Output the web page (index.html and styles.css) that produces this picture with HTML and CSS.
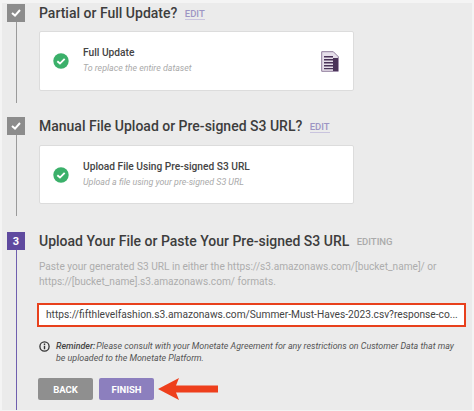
FILE: index.html
```html
<!DOCTYPE html>
<html lang="en">
<head>
<meta charset="utf-8">
<title>Upload</title>
<link rel="stylesheet" href="styles.css">
</head>
<body>
<main class="page">
  <section class="step step-one">
    <div class="rail">
      <div class="badge done"><svg width="10" height="8" viewBox="0 0 10 8"><path d="M1 4l3 2.6L9 1" fill="none" stroke="#fff" stroke-width="2"/></svg></div>
      <div class="line"></div>
    </div>
    <div class="content">
      <h2 class="title">Partial or Full Update? <a class="edit">EDIT</a></h2>
      <div class="card">
        <svg class="check" width="16" height="16" viewBox="0 0 17 17"><circle cx="8.5" cy="8.5" r="8.2" fill="#3bb06a"/><path d="M4.6 8.7l2.8 2.5 5-5" fill="none" stroke="#fff" stroke-width="2"/></svg>
        <div class="card-text">
          <div class="card-name">Full Update</div>
          <div class="card-desc">To replace the entire dataset</div>
        </div>
        <svg class="doc" width="18" height="21" viewBox="0 0 18 21"><path d="M.7.7h11.6l5 5v14.6H.7z" fill="#e6dfea" stroke="#8f7c9c" stroke-width="1"/><path d="M12 2v5h5v13h-5z" fill="#4a3358"/><path d="M3 5h9v1.6H3zM3 8h9v1.6H3zM3 11h9v1.6H3zM3 14h9v1.6H3zM3 17h9v1.2H3z" fill="#4a3358"/></svg>
      </div>
    </div>
  </section>
  <section class="step step-two">
    <div class="rail">
      <div class="badge done"><svg width="10" height="8" viewBox="0 0 10 8"><path d="M1 4l3 2.6L9 1" fill="none" stroke="#fff" stroke-width="2"/></svg></div>
      <div class="line"></div>
    </div>
    <div class="content">
      <h2 class="title">Manual File Upload or Pre-signed S3 URL? <a class="edit">EDIT</a></h2>
      <div class="card">
        <svg class="check" width="16" height="16" viewBox="0 0 17 17"><circle cx="8.5" cy="8.5" r="8.2" fill="#3bb06a"/><path d="M4.6 8.7l2.8 2.5 5-5" fill="none" stroke="#fff" stroke-width="2"/></svg>
        <div class="card-text">
          <div class="card-name">Upload File Using Pre-signed S3 URL</div>
          <div class="card-desc">Upload a file using your pre-signed S3 URL</div>
        </div>
      </div>
    </div>
  </section>
  <section class="step step-three">
    <div class="rail">
      <div class="badge active">3</div>
      <div class="line line-active"></div>
    </div>
    <div class="content">
      <h2 class="title">Upload Your File or Paste Your Pre-signed S3 URL <span class="editing">EDITING</span></h2>
      <p class="hint">Paste your generated S3 URL in either the https://s3.amazonaws.com/[bucket_name]/ or https://[bucket_name].s3.amazonaws.com/ formats.</p>
      <div class="url">https://fifthlevelfashion.s3.amazonaws.com/Summer-Must-Haves-2023.csv?response-co...</div>
      <div class="reminder">
        <svg class="info" width="11" height="11" viewBox="0 0 11 11"><circle cx="5.5" cy="5.5" r="4.6" fill="none" stroke="#333" stroke-width="1.3"/><path d="M4.8 2.6h1.4v1.3H4.8zM4.8 4.8h1.4v3.5H4.8z" fill="#333"/></svg>
        <p class="reminder-text"><b>Reminder:</b>Please consult with your Monetate Agreement for any restrictions on Customer Data that may be uploaded to the Monetate Platform.</p>
      </div>
      <div class="actions">
        <button class="btn back">BACK</button>
        <button class="btn finish">FINISH</button>
        <svg class="arrow" width="60" height="22" viewBox="0 0 60 22"><path d="M0 11L21 0l-3 7.5h42v7H18l3 7.5z" fill="#ee3f1c"/></svg>
      </div>
    </div>
  </section>
</main>
</body>
</html>
```
FILE: styles.css
```css
* { box-sizing: border-box; }
html, body { margin: 0; height: 100%; }
body { background: #f4f4f4; font-family: Roboto, "Liberation Sans", sans-serif; color: #3a3a3a; overflow: hidden; }
.page { background: #ebebeb; margin: 3px 2px 0 2px; height: 407px; padding: 1px 0 0 5px; overflow: hidden; }
.step { display: flex; }
.step-one { height: 113px; }
.step-two { height: 115px; }
.step-three { height: 178px; }
.rail { width: 18px; margin-right: 14px; display: flex; flex-direction: column; align-items: center; flex: none; }
.badge { width: 18px; height: 18px; display: flex; align-items: center; justify-content: center; color: #fff; font-size: 11px; font-weight: 700; flex: none; }
.done { background: #8c8c8c; }
.active { background: #5f4a9f; }
.line { width: 1px; background: #9a9a9a; height: 81px; }
.line-active { background: #6f5fae; height: 170px; }
.content { width: 430px; flex: none; }
.title { margin: 0; font-size: 14px; line-height: 18px; font-weight: 500; color: #3d3d3d; white-space: nowrap; }
.edit { font-size: 9.5px; font-weight: 500; color: #9d95c4; border-bottom: 1px solid #c9c4de; margin-left: 4px; vertical-align: 1px; }
.editing { font-size: 9.5px; font-weight: 500; color: #aaa; margin-left: 4px; vertical-align: 1px; }
.card { margin-top: 8px; width: 315px; height: 60px; background: #fff; border: 1px solid #dcdcdc; border-radius: 2px; display: flex; align-items: center; padding: 0 14px 0 13px; }
.step-two .card { margin-top: 9px; height: 59px; }
.check { flex: none; }
.card-text { margin-left: 14px; flex: 1; }
.step-one .card-text { margin-bottom: 2px; }
.card-name { font-size: 10.2px; line-height: 14px; font-weight: 500; color: #444; }
.card-desc { font-size: 8.85px; line-height: 14px; margin-top: 1px; font-style: italic; color: #aaa; }
.doc { flex: none; }
.hint { margin: 8px 0 0; width: 410px; font-size: 10.15px; line-height: 15px; color: #adadad; }
.url { margin: 14px 0 0 -2px; width: 429px; height: 24px; border: 2px solid #e8401c; background: #fff; font-size: 10.2px; line-height: 19px; padding: 0 7px; color: #444; white-space: nowrap; overflow: hidden; }
.reminder { display: flex; margin-top: 13px; }
.info { flex: none; margin-top: 1px; }
.reminder-text { margin: 0 0 0 6px; width: 404px; font-size: 8.9px; line-height: 12px; font-style: italic; color: #555; }
.reminder-text b { font-weight: 500; color: #444; margin-right: 1px; }
.actions { display: flex; align-items: center; margin: 14px 0 0 -1px; }
.btn { width: 55px; height: 22px; border: 0; border-radius: 2px; color: #fff; font: 700 9.5px Roboto, sans-serif; padding: 0; }
.back { background: #8f8f8f; margin-right: 6px; }
.finish { background: #8c7fbe; }
.arrow { margin-left: 4px; }
```
